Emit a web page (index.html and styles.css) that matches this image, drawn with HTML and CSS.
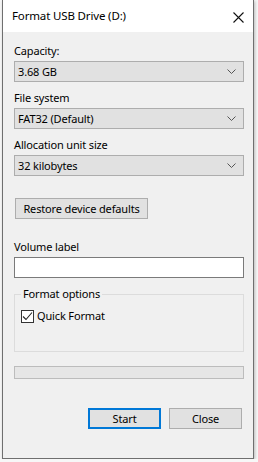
FILE: index.html
```html
<!DOCTYPE html>
<html lang="en">
<head>
    <meta charset="UTF-8">
    <meta name="viewport" content="width=device-width, initial-scale=1.0">
    <title>Format USB Drive (D:)</title>
    <link rel="stylesheet" href="styles.css">
</head>
<body>
    <div class="window">
        <div class="titlebar">
            <span class="title">Format USB Drive (D:)</span>
            <svg class="close-icon" width="11" height="11" viewBox="0 0 11 11">
                <path d="M0.5 0.5L10.5 10.5M10.5 0.5L0.5 10.5" stroke="#111" stroke-width="1.1" fill="none"/>
            </svg>
        </div>

        <div class="content">
            <div class="field-label">Capacity:</div>
            <div class="select">
                <span>3.68 GB</span>
                <svg class="chevron" width="9" height="5" viewBox="0 0 9 5"><path d="M0.5 0.5L4.5 4.5L8.5 0.5" stroke="#555" fill="none"/></svg>
            </div>

            <div class="field-label">File system</div>
            <div class="select">
                <span>FAT32 (Default)</span>
                <svg class="chevron" width="9" height="5" viewBox="0 0 9 5"><path d="M0.5 0.5L4.5 4.5L8.5 0.5" stroke="#555" fill="none"/></svg>
            </div>

            <div class="field-label">Allocation unit size</div>
            <div class="select">
                <span>32 kilobytes</span>
                <svg class="chevron" width="9" height="5" viewBox="0 0 9 5"><path d="M0.5 0.5L4.5 4.5L8.5 0.5" stroke="#555" fill="none"/></svg>
            </div>

            <button class="btn restore">Restore device defaults</button>

            <div class="field-label volume">Volume label</div>
            <div class="textbox"></div>

            <fieldset class="group">
                <legend>Format options</legend>
                <div class="check">
                    <span class="check-box">
                        <svg width="11" height="11" viewBox="0 0 11 11"><path d="M1 5.5L4 8.5L10 1.5" stroke="#222" stroke-width="1.1" fill="none"/></svg>
                    </span>
                    Quick Format
                </div>
            </fieldset>

            <div class="progress"></div>

            <div class="actions">
                <button class="btn default">Start</button>
                <button class="btn">Close</button>
            </div>
        </div>
    </div>
</body>
</html>
```

FILE: styles.css
```css
body {
    margin: 0;
    padding: 0;
    background: #f7f7f7;
    font-family: "Noto Sans", "Open Sans", sans-serif;
    font-size: 11px;
    letter-spacing: -0.15px;
    color: #000;
}

.window {
    box-sizing: border-box;
    width: 252px;
    height: 459px;
    margin-left: 2px;
    background: #f0f0f0;
    border: 1px solid #6f6f6f;
    border-top: none;
    box-shadow: 1px 1px 3px rgba(0, 0, 0, 0.25);
}

.titlebar {
    height: 32px;
    background: #fff;
    display: flex;
    align-items: center;
    justify-content: space-between;
    padding: 0 8px 0 9px;
}

.title {
    font-size: 11.5px;
    margin-top: -1px;
}

.close-icon {
    margin-top: 2px;
    margin-right: 1px;
}

.content {
    display: flex;
    flex-direction: column;
    padding: 11px 9px 0 11px;
}

.field-label {
    line-height: 16px;
    height: 16px;
    margin-bottom: 2px;
}

.select {
    box-sizing: border-box;
    height: 21px;
    background: #e1e1e1;
    border: 1px solid #adadad;
    display: flex;
    align-items: center;
    justify-content: space-between;
    padding: 0 7px 0 3px;
    margin-bottom: 8px;
}

.btn {
    box-sizing: border-box;
    height: 21px;
    padding: 0;
    margin: 0;
    background: #e1e1e1;
    border: 1px solid #adadad;
    font-family: inherit;
    font-size: 11px;
    letter-spacing: inherit;
    color: #000;
}

.restore {
    width: 133px;
    margin: 14px 0 0 1px;
}

.volume {
    margin-top: 20px;
}

.textbox {
    box-sizing: border-box;
    height: 21px;
    background: #fff;
    border: 1px solid #7a7a7a;
}

.group {
    margin: 8px 0 0 0;
    padding: 6px 6px 27px 6px;
    border: 1px solid #dcdcdc;
    min-width: 0;
}

.group legend {
    padding: 0 2px;
    line-height: 16px;
}

.check {
    display: flex;
    align-items: center;
    gap: 3px;
    line-height: 16px;
}

.check-box {
    box-sizing: border-box;
    width: 13px;
    height: 13px;
    border: 1px solid #333;
    background: #fff;
    display: flex;
    align-items: center;
    justify-content: center;
}

.progress {
    box-sizing: border-box;
    height: 13px;
    margin-top: 14px;
    background: #e6e6e6;
    border: 1px solid #bcbcbc;
}

.actions {
    display: flex;
    justify-content: flex-end;
    gap: 8px;
    margin-top: 29px;
    padding-right: 2px;
}

.actions .btn {
    width: 73px;
}

.actions .default {
    border: 2px solid #0078d7;
}
```
